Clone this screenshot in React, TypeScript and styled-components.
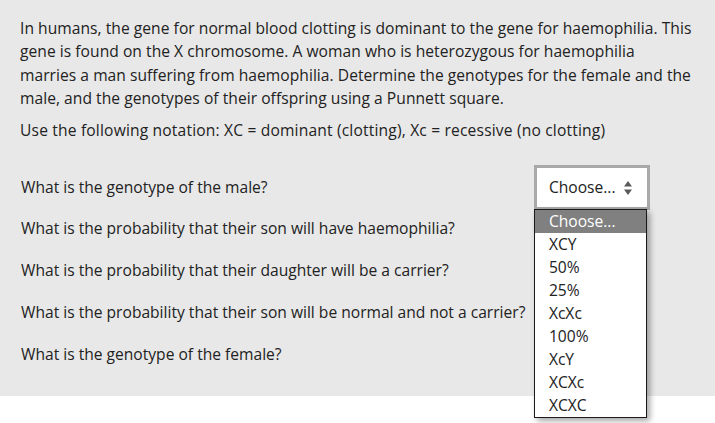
import React from "react";
import styled, { createGlobalStyle } from "styled-components";

const GlobalStyle = createGlobalStyle`
  html, body { margin: 0; padding: 0; background: #ffffff; }
  body { min-height: 423px; }
  * { box-sizing: border-box; }
`;

const Panel = styled.div`
  background: #e8e8e8;
  padding: 16.5px 20px 20.5px 20px;
  font-family: "Open Sans", "Noto Sans", sans-serif;
  font-size: 15.6px;
  color: #222222;
`;

const Para = styled.p<{ $gap?: number; $spacing?: number }>`
  margin: 0 0 ${(p) => p.$gap ?? 0}px 0;
  line-height: 23.5px;
  letter-spacing: ${(p) => p.$spacing ?? 0}px;
  white-space: nowrap;
`;

const Questions = styled.div`
  display: grid;
  grid-template-columns: auto auto;
  justify-content: start;
  column-gap: 11.5px;
  grid-auto-rows: 41.75px;
  align-items: center;
  margin-top: 24px;
`;

const Question = styled.div`
  padding-left: 1px;
  line-height: 23.5px;
  white-space: nowrap;
`;

const SelectWrap = styled.div`
  position: relative;
  width: 110px;
  height: 39px;
`;

const SelectBox = styled.div`
  width: 110px;
  height: 39px;
  background: #ffffff;
  display: flex;
  align-items: center;
  justify-content: space-between;
  padding: 0 15px 0 12px;
  box-shadow: 0 0 0 3px #a9a9a9;
  line-height: 23.5px;
`;

const Arrows = styled.svg`
  width: 8px;
  height: 14px;
  flex: none;
  margin-top: 1px;
`;

const Dropdown = styled.ul`
  position: absolute;
  left: -3px;
  top: 41px;
  width: 113px;
  margin: 0;
  padding: 0;
  list-style: none;
  background: #ffffff;
  border: 1px solid #1a1a1a;
  box-shadow: 3px 3px 6px rgba(0, 0, 0, 0.35);
  z-index: 10;
`;

const Option = styled.li<{ $active?: boolean }>`
  height: 23px;
  line-height: 23px;
  padding-left: 14px;
  background: ${(p) => (p.$active ? "#808080" : "transparent")};
  color: ${(p) => (p.$active ? "#ffffff" : "#222222")};
  white-space: nowrap;
`;

const options = ["Choose...", "XCY", "50%", "25%", "XcXc", "100%", "XcY", "XCXc", "XCXC"];

const questions = [
  "What is the genotype of the male?",
  "What is the probability that their son will have haemophilia?",
  "What is the probability that their daughter will be a carrier?",
  "What is the probability that their son will be normal and not a carrier?",
  "What is the genotype of the female?",
];

function ArrowIcon() {
  return (
    <Arrows viewBox="0 0 8 14">
      <path d="M4 0 L8 5.5 L0 5.5 Z" fill="#5a5a5a" />
      <path d="M0 8.5 L8 8.5 L4 14 Z" fill="#5a5a5a" />
    </Arrows>
  );
}

export default function App() {
  return (
    <>
      <GlobalStyle />
      <Panel>
        <Para $gap={8.4} $spacing={0.04}>
          In humans, the gene for normal blood clotting is dominant to the gene for haemophilia. This
          <br />
          gene is found on the X chromosome. A woman who is heterozygous for haemophilia
          <br />
          marries a man suffering from haemophilia. Determine the genotypes for the female and the
          <br />
          male, and the genotypes of their offspring using a Punnett square.
        </Para>
        <Para $spacing={0.17}>
          Use the following notation: XC = dominant (clotting), Xc = recessive (no clotting)
        </Para>
        <Questions>
          {questions.map((q, i) => (
            <React.Fragment key={q}>
              <Question>{q}</Question>
              {i === 0 ? (
                <SelectWrap>
                  <SelectBox>
                    <span>Choose...</span>
                    <ArrowIcon />
                  </SelectBox>
                  <Dropdown>
                    {options.map((o, j) => (
                      <Option key={o} $active={j === 0}>
                        {o}
                      </Option>
                    ))}
                  </Dropdown>
                </SelectWrap>
              ) : (
                <SelectWrap />
              )}
            </React.Fragment>
          ))}
        </Questions>
      </Panel>
    </>
  );
}
